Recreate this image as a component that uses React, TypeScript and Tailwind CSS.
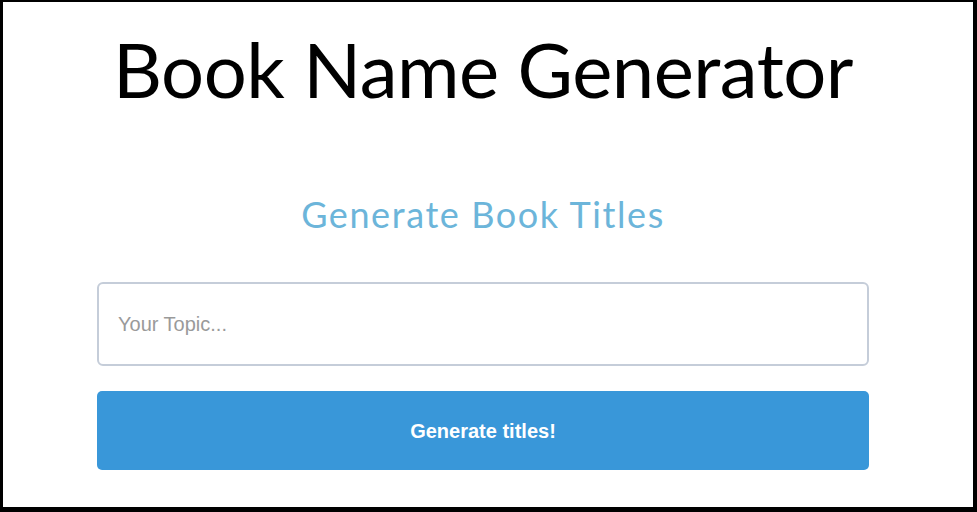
import React, { useState } from 'react';

const App: React.FC = () => {
  const [topic, setTopic] = useState('');

  return (
    <div className="h-[512px] w-[977px] bg-white border-l-[3px] border-t-2 border-r-4 border-b-[5px] border-black font-['Lato',sans-serif]">
      <div className="ml-[94px] w-[772px] flex flex-col">
        <h1 className="mt-[29px] text-center text-[76px] leading-[76px] font-normal text-black tracking-[-0.5px]">
          Book Name Generator
        </h1>

        <h2 className="mt-[89px] text-center text-[36px] leading-[36px] font-normal text-[#6cb5da] tracking-[1.6px]">
          Generate Book Titles
        </h2>

        <input
          autoFocus
          value={topic}
          onChange={e => setTopic(e.target.value)}
          placeholder="Your Topic..."
          className="mt-[50px] h-[84px] w-full rounded-[6px] border-2 border-[#c5cdd9] bg-white px-[19px] text-[20px] font-['Liberation_Sans',sans-serif] text-gray-700 caret-black placeholder:text-[#9a9a9a] outline-none"
        />

        <button className="mt-[25px] h-[79px] w-full rounded-[5px] bg-[#3997d9] text-white font-['Liberation_Sans',sans-serif] font-bold text-[20px]">
          Generate titles!
        </button>
      </div>
    </div>
  );
};

export default App;
